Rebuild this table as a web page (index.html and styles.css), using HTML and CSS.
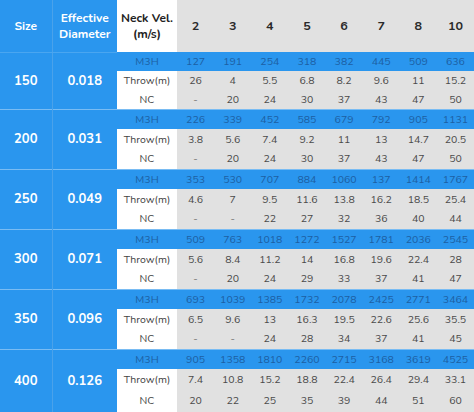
FILE: index.html
```html
<!DOCTYPE html>
<html>
<head>
<meta charset="utf-8">
<link rel="stylesheet" href="styles.css">
</head>
<body>
<table class="tbl">
  <colgroup>
    <col class="c-size"><col class="c-eff"><col class="c-neck">
    <col><col><col><col><col><col><col><col>
  </colgroup>
  <thead>
    <tr class="head">
      <th class="h-blue">Size</th>
      <th class="h-blue">Effective<br>Diameter</th>
      <th class="h-neck">Neck Vel.<br>(m/s)</th>
      <th class="h-num">2</th><th class="h-num">3</th><th class="h-num">4</th><th class="h-num">5</th>
      <th class="h-num">6</th><th class="h-num">7</th><th class="h-num">8</th><th class="h-num">10</th>
    </tr>
  </thead>
  <tbody class="g g1">
    <tr class="m3h"><td class="big" rowspan="3">150</td><td class="big eff" rowspan="3">0.018</td><td>M3H</td><td>127</td><td>191</td><td>254</td><td>318</td><td>382</td><td>445</td><td>509</td><td>636</td></tr>
    <tr class="val"><td class="lbl">Throw(m)</td><td>26</td><td>4</td><td>5.5</td><td>6.8</td><td>8.2</td><td>9.6</td><td>11</td><td>15.2</td></tr>
    <tr class="val last"><td class="lbl">NC</td><td>-</td><td>20</td><td>24</td><td>30</td><td>37</td><td>43</td><td>47</td><td>50</td></tr>
  </tbody>
  <tbody class="g">
    <tr class="m3h"><td class="big" rowspan="3">200</td><td class="big eff" rowspan="3">0.031</td><td>M3H</td><td>226</td><td>339</td><td>452</td><td>585</td><td>679</td><td>792</td><td>905</td><td>1131</td></tr>
    <tr class="val"><td class="lbl">Throw(m)</td><td>3.8</td><td>5.6</td><td>7.4</td><td>9.2</td><td>11</td><td>13</td><td>14.7</td><td>20.5</td></tr>
    <tr class="val last"><td class="lbl">NC</td><td>-</td><td>20</td><td>24</td><td>30</td><td>37</td><td>43</td><td>47</td><td>50</td></tr>
  </tbody>
  <tbody class="g">
    <tr class="m3h"><td class="big" rowspan="3">250</td><td class="big eff" rowspan="3">0.049</td><td>M3H</td><td>353</td><td>530</td><td>707</td><td>884</td><td>1060</td><td>137</td><td>1414</td><td>1767</td></tr>
    <tr class="val"><td class="lbl">Throw(m)</td><td>4.6</td><td>7</td><td>9.5</td><td>11.6</td><td>13.8</td><td>16.2</td><td>18.5</td><td>25.4</td></tr>
    <tr class="val last"><td class="lbl">NC</td><td>-</td><td>-</td><td>22</td><td>27</td><td>32</td><td>36</td><td>40</td><td>44</td></tr>
  </tbody>
  <tbody class="g">
    <tr class="m3h"><td class="big" rowspan="3">300</td><td class="big eff" rowspan="3">0.071</td><td>M3H</td><td>509</td><td>763</td><td>1018</td><td>1272</td><td>1527</td><td>1781</td><td>2036</td><td>2545</td></tr>
    <tr class="val"><td class="lbl">Throw(m)</td><td>5.6</td><td>8.4</td><td>11.2</td><td>14</td><td>16.8</td><td>19.6</td><td>22.4</td><td>28</td></tr>
    <tr class="val last"><td class="lbl">NC</td><td>-</td><td>20</td><td>24</td><td>29</td><td>33</td><td>37</td><td>41</td><td>47</td></tr>
  </tbody>
  <tbody class="g">
    <tr class="m3h"><td class="big" rowspan="3">350</td><td class="big eff" rowspan="3">0.096</td><td>M3H</td><td>693</td><td>1039</td><td>1385</td><td>1732</td><td>2078</td><td>2425</td><td>2771</td><td>3464</td></tr>
    <tr class="val"><td class="lbl">Throw(m)</td><td>6.5</td><td>9.6</td><td>13</td><td>16.3</td><td>19.5</td><td>22.6</td><td>25.6</td><td>35.5</td></tr>
    <tr class="val last"><td class="lbl">NC</td><td>-</td><td>-</td><td>24</td><td>28</td><td>34</td><td>37</td><td>41</td><td>45</td></tr>
  </tbody>
  <tbody class="g g6">
    <tr class="m3h"><td class="big" rowspan="3">400</td><td class="big eff" rowspan="3">0.126</td><td>M3H</td><td>905</td><td>1358</td><td>1810</td><td>2260</td><td>2715</td><td>3168</td><td>3619</td><td>4525</td></tr>
    <tr class="val"><td class="lbl">Throw(m)</td><td>7.4</td><td>10.8</td><td>15.2</td><td>18.8</td><td>22.4</td><td>26.4</td><td>29.4</td><td>33.1</td></tr>
    <tr class="val last"><td class="lbl">NC</td><td>20</td><td>22</td><td>25</td><td>35</td><td>39</td><td>44</td><td>51</td><td>60</td></tr>
  </tbody>
</table>
</body>
</html>
```
FILE: styles.css
```css
html, body {
  margin: 0;
  padding: 0;
  background: #e1e1e1;
}
.tbl {
  width: 474px;
  border-collapse: collapse;
  table-layout: fixed;
  font-family: "Nunito", "Open Sans", "Noto Sans", sans-serif;
  text-align: center;
}
.c-size { width: 52px; }
.c-eff { width: 65px; }
.c-neck { width: 60px; }
th, td {
  padding: 0;
  text-align: center;
  vertical-align: middle;
  white-space: nowrap;
}
.head { height: 52px; }
.head th {
  font-size: 12px;
  font-weight: 700;
  line-height: 16px;
}
.h-blue {
  background: #2a96ee;
  color: #ffffff;
  border-bottom: 1px solid #4aa6f0;
}
.h-blue:first-child {
  border-right: 1px solid #4aa2ea;
}
.h-neck {
  background: #ffffff;
  color: #222222;
}
.h-num {
  background: #e1e1e1;
  color: #2a2a2a;
  font-size: 12.5px !important;
}
.big {
  background: #2a96ee;
  color: #ffffff;
  font-weight: 700;
  font-size: 13px;
  border-right: 1px solid #4aa2ea;
}
.big.eff {
  border-right: none;
}
.g tr { height: 20px; }
.g1 tr { height: 19px; }
.g {
  border-bottom: 1px solid #79bcf3;
}
.m3h td {
  background: #2a96ee;
  color: #1d5fa3;
  font-size: 10.5px;
}
.m3h td.big {
  color: #ffffff;
  font-size: 13px;
}
.val td {
  background: #e1e1e1;
  color: #4a4a4a;
  font-size: 10.5px;
}
.val td.lbl {
  background: #ffffff;
  color: #444444;
}
.g6 tr.last { height: 23px; }
```
